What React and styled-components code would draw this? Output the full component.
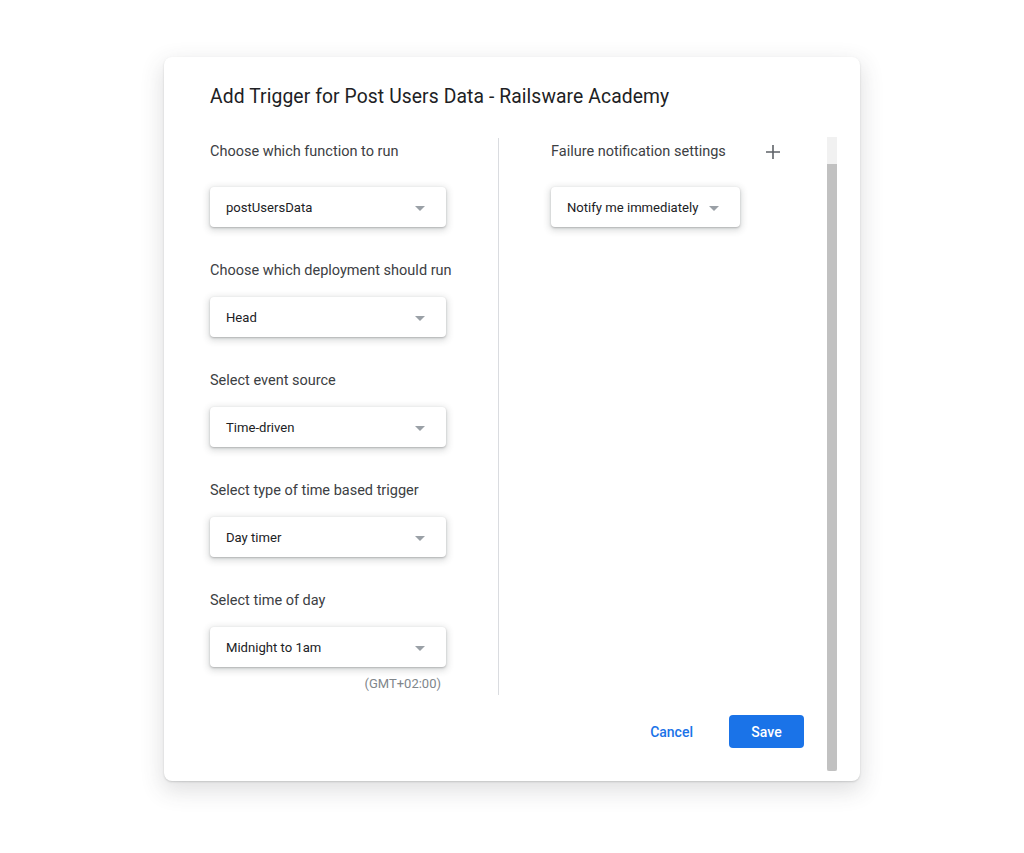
import React from 'react';
import styled, { createGlobalStyle } from 'styled-components';

const GlobalStyle = createGlobalStyle`
  html, body {
    margin: 0;
    background: #ffffff;
  }
  body {
    font-family: Roboto, "Liberation Sans", Arial, sans-serif;
    color: #202124;
  }
`;

const Page = styled.div`
  width: 1024px;
  height: 853px;
  padding: 57px 0 0 164px;
  box-sizing: border-box;
`;

const Dialog = styled.div`
  width: 696px;
  height: 724px;
  background: #fff;
  border-radius: 8px;
  box-shadow: 0 1px 2px rgba(60, 64, 67, 0.2), 0 8px 22px 2px rgba(60, 64, 67, 0.16);
  display: flex;
  flex-direction: column;
  box-sizing: border-box;
`;

const Title = styled.h1`
  margin: 0;
  padding: 28px 0 0 46px;
  height: 80px;
  box-sizing: border-box;
  font-family: Roboto, "Open Sans", sans-serif;
  font-weight: 400;
  font-size: 19.3px;
  line-height: 24px;
  color: #202124;
  letter-spacing: 0.1px;
`;

const Body = styled.div`
  display: flex;
  flex: 1;
  padding: 0 23px 10px 46px;
  min-height: 0;
`;

const Scroller = styled.div`
  flex: 1;
  display: flex;
  flex-direction: column;
  padding-right: 23px;
`;

const Columns = styled.div`
  display: flex;
  margin-top: 1px;
`;

const LeftColumn = styled.div`
  width: 236px;
  display: flex;
  flex-direction: column;
  margin-right: 52px;
`;

const RightColumn = styled.div`
  flex: 1;
  padding-left: 52px;
  display: flex;
  flex-direction: column;
`;

const Divider = styled.div`
  width: 1px;
  height: 557px;
  background: #dadce0;
`;

const Field = styled.div`
  display: flex;
  flex-direction: column;
  margin-bottom: ${(p) => (p.$last ? '0' : '34px')};
`;

const Label = styled.div`
  font-size: 14.5px;
  line-height: 20px;
  color: #3c4043;
  white-space: nowrap;
  margin-top: ${(p) => (p.$first ? '4px' : '0')};
  margin-bottom: ${(p) => (p.$first ? '25px' : '16px')};
`;

const HeaderRow = styled.div`
  display: flex;
  align-items: center;
  justify-content: space-between;
  height: 20px;
  margin-top: 4px;
  margin-bottom: 25px;
  width: 232px;
`;

const SelectBox = styled.div`
  width: ${(p) => p.$width}px;
  height: 40px;
  box-sizing: border-box;
  border-radius: 4px;
  background: #fff;
  box-shadow: 0 1px 2px rgba(60, 64, 67, 0.3), 0 2px 6px 2px rgba(60, 64, 67, 0.17);
  display: flex;
  align-items: center;
  justify-content: space-between;
  padding: 0 21px 0 16px;
  font-size: 13.1px;
  color: #202124;
`;

const Arrow = styled.span`
  width: 0;
  height: 0;
  border-left: 5px solid transparent;
  border-right: 5px solid transparent;
  border-top: 5px solid #9aa0a6;
  margin-top: 2px;
`;

const Hint = styled.div`
  font-size: 13px;
  line-height: 16px;
  color: #80868b;
  text-align: right;
  padding-right: 5px;
  margin-top: 9px;
`;

const IconButton = styled.button`
  border: 0;
  background: transparent;
  padding: 0;
  width: 20px;
  height: 20px;
  display: flex;
  align-items: center;
  justify-content: center;
  cursor: pointer;
`;

const Footer = styled.div`
  display: flex;
  justify-content: flex-end;
  align-items: center;
  gap: 12px;
  margin-top: 20px;
`;

const TextButton = styled.button`
  border: 0;
  background: transparent;
  color: #1a73e8;
  font-family: Roboto, sans-serif;
  font-weight: 500;
  font-size: 14px;
  height: 33px;
  padding: 0 24px;
  border-radius: 4px;
  cursor: pointer;
`;

const PrimaryButton = styled(TextButton)`
  background: #1a73e8;
  color: #fff;
  width: 75px;
  padding: 0;
`;

const ScrollTrack = styled.div`
  width: 10px;
  align-self: stretch;
  background: #f1f1f1;
  display: flex;
  flex-direction: column;
  padding-top: 27px;
  box-sizing: border-box;
`;

const ScrollThumb = styled.div`
  flex: 1;
  background: #c1c1c1;
  border-radius: 0 0 2px 2px;
`;

const Select = ({ value, width }) => (
  <SelectBox $width={width}>
    <span>{value}</span>
    <Arrow />
  </SelectBox>
);

const PlusIcon = () => (
  <svg width="14" height="14" viewBox="0 0 14 14">
    <path d="M7 0v14M0 7h14" stroke="#5f6368" strokeWidth="1.6" fill="none" />
  </svg>
);

const fields = [
  ['Choose which function to run', 'postUsersData'],
  ['Choose which deployment should run', 'Head'],
  ['Select event source', 'Time-driven'],
  ['Select type of time based trigger', 'Day timer'],
  ['Select time of day', 'Midnight to 1am'],
];

export default function App() {
  return (
    <>
      <GlobalStyle />
      <Page>
        <Dialog>
          <Title>Add Trigger for Post Users Data - Railsware Academy</Title>
          <Body>
            <Scroller>
              <Columns>
                <LeftColumn>
                  {fields.map(([label, value], i) => (
                    <Field key={label} $last={i === fields.length - 1}>
                      <Label $first={i === 0}>{label}</Label>
                      <Select value={value} width={236} />
                    </Field>
                  ))}
                  <Hint>(GMT+02:00)</Hint>
                </LeftColumn>
                <Divider />
                <RightColumn>
                  <HeaderRow>
                    <Label style={{ margin: 0 }}>Failure notification settings</Label>
                    <IconButton aria-label="Add">
                      <PlusIcon />
                    </IconButton>
                  </HeaderRow>
                  <Select value="Notify me immediately" width={189} />
                </RightColumn>
              </Columns>
              <Footer>
                <TextButton>Cancel</TextButton>
                <PrimaryButton>Save</PrimaryButton>
              </Footer>
            </Scroller>
            <ScrollTrack>
              <ScrollThumb />
            </ScrollTrack>
          </Body>
        </Dialog>
      </Page>
    </>
  );
}
